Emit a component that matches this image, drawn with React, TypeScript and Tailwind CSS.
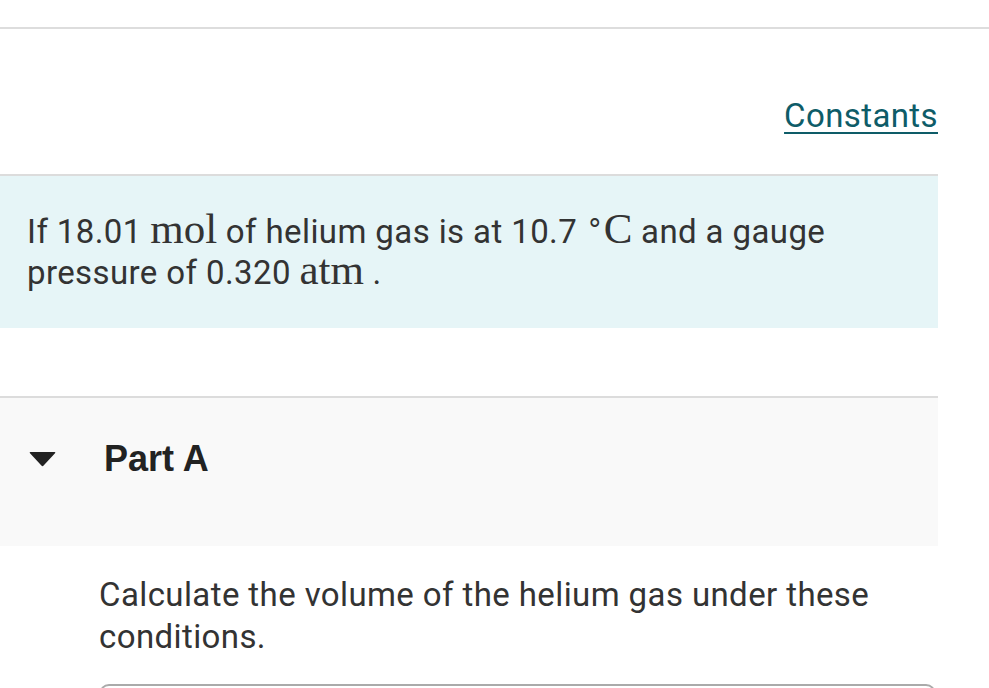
export default function App() {
  return (
    <div className="min-h-screen bg-white font-['Roboto',sans-serif] text-[#333333] tracking-[0.4px]">
      <div className="h-[27px]" />
      <div className="h-[2px] bg-[#dddddd]" />

      <div className="w-[938px]">
        <div className="flex justify-end pt-[69px] pb-[40px]">
          <a
            href="#"
            className="text-[33px] leading-[36px] text-[#0e5c68] underline decoration-2 underline-offset-[5px]"
          >
            Constants
          </a>
        </div>

        <div className="border-t-2 border-[#dcdcdc] bg-[#e6f5f7] pl-[27px] pr-[40px] pt-[35px] pb-[35px] text-[33px] leading-[41px]">
          If 18.01{' '}
          <span className="font-['Liberation_Serif',serif] text-[43px] leading-[0] tracking-normal">mol</span>{' '}
          of helium gas is at 10.7{' '}
          <span className="font-['Liberation_Serif',serif] leading-[0] tracking-normal">
            <sup className="text-[28px] top-[-0.45em]">∘</sup>
            <span className="text-[43px]">C</span>
          </span>{' '}
          and a gauge pressure of 0.320{' '}
          <span className="font-['Liberation_Serif',serif] text-[43px] leading-[0] tracking-normal">atm</span> .
        </div>

        <div className="mt-[68px] border-t-2 border-[#dcdcdc] bg-[#f9f9f9] h-[150px]">
          <div className="flex items-center pl-[29px] pt-[41px]">
            <svg width="27" height="16" viewBox="0 0 27 16" className="mr-[48px]">
              <path d="M1.5 1 L25.5 1 Q27 1 26 2.3 L14.6 14.6 Q13.5 15.8 12.4 14.6 L1 2.3 Q0 1 1.5 1 Z" fill="#222222" />
            </svg>
            <span className="font-['Liberation_Sans',Arial,sans-serif] text-[36px] leading-[40px] font-bold text-[#222222] tracking-normal">
              Part A
            </span>
          </div>
        </div>

        <div className="pl-[99px] pt-[28px] text-[33px] leading-[42px]">
          Calculate the volume of the helium gas under these conditions.
        </div>

        <div className="mt-[26px] ml-[99px] mr-[2px] h-[60px] rounded-[10px] border-2 border-[#aaaaaa]" />
      </div>
    </div>
  );
}
